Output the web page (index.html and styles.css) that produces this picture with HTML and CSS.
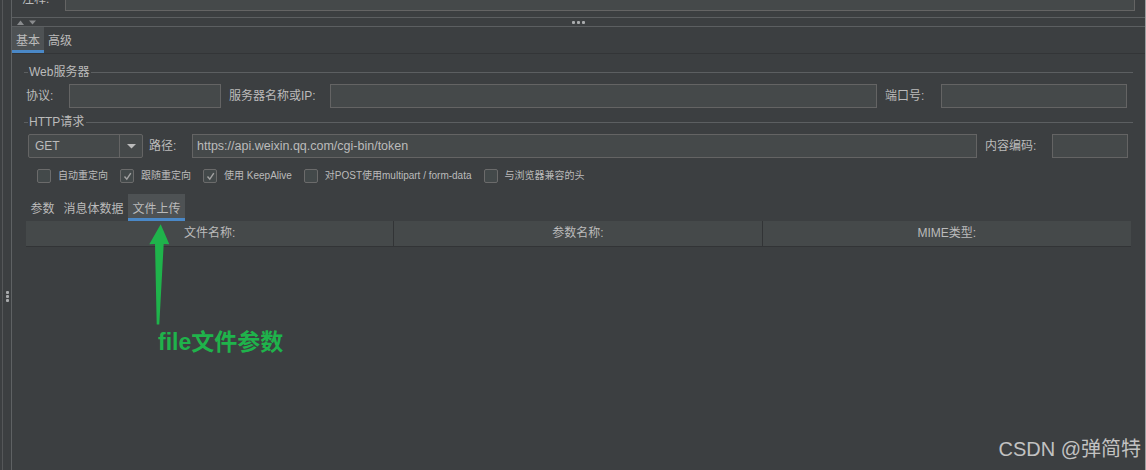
FILE: index.html
```html
<!DOCTYPE html>
<html lang="zh-CN">
<head>
<meta charset="utf-8">
<title>HTTP请求</title>
<link rel="stylesheet" href="styles.css">
</head>
<body>
<div class="app">
  <div class="sidebar">
    <span class="vdots"><i></i><i></i><i></i></span>
  </div>
  <div class="main">
    <div class="comment-row">
      <div class="comment-inner">
        <span class="lbl comment-lbl">注释:</span>
        <div class="field grow"></div>
      </div>
    </div>
    <div class="splitter">
      <span class="arrows">
        <svg width="19" height="5" viewBox="0 0 19 5"><polygon points="0,5 3.5,0.5 7,5" fill="#8a8c8e"/><polygon points="12,0.5 19,0.5 15.5,4.5" fill="#8a8c8e"/></svg>
      </span>
      <span class="hdots"><i></i><i></i><i></i></span>
      <span></span>
    </div>
    <div class="tabs">
      <div class="tab active">基本</div>
      <div class="tab">高级</div>
    </div>
    <div class="content">
      <div class="group-title"><span>Web服务器</span></div>
      <div class="row row-server">
        <span class="lbl w43">协议:</span>
        <div class="field w152"></div>
        <span class="lbl w101 ml8">服务器名称或IP:</span>
        <div class="field grow"></div>
        <span class="lbl w56 ml8">端口号:</span>
        <div class="field w186"></div>
      </div>
      <div class="group-title t2"><span>HTTP请求</span></div>
      <div class="row row-http">
        <div class="combo">
          <span class="combo-val">GET</span>
          <span class="combo-btn"><svg width="9" height="5" viewBox="0 0 9 5"><polygon points="0,0 9,0 4.5,4.5" fill="#bbbbbb"/></svg></span>
        </div>
        <span class="lbl w43 ml6">路径:</span>
        <div class="field grow"><span class="field-text">https://api.weixin.qq.com/cgi-bin/token</span></div>
        <span class="lbl w67 ml8">内容编码:</span>
        <div class="field w76"></div>
      </div>
      <div class="checks">
        <label class="check"><span class="box"></span><span class="ctext">自动重定向</span></label>
        <label class="check"><span class="box checked"><svg width="11" height="11" viewBox="0 0 11 11"><polyline points="2.5,5.5 4.8,8.2 8.8,2.2" fill="none" stroke="#a3a3a3" stroke-width="1.4"/></svg></span><span class="ctext">跟随重定向</span></label>
        <label class="check"><span class="box checked"><svg width="11" height="11" viewBox="0 0 11 11"><polyline points="2.5,5.5 4.8,8.2 8.8,2.2" fill="none" stroke="#a3a3a3" stroke-width="1.4"/></svg></span><span class="ctext">使用 KeepAlive</span></label>
        <label class="check"><span class="box"></span><span class="ctext">对POST使用multipart / form-data</span></label>
        <label class="check"><span class="box"></span><span class="ctext">与浏览器兼容的头</span></label>
      </div>
      <div class="subtabs">
        <div class="subtab">参数</div>
        <div class="subtab">消息体数据</div>
        <div class="subtab active">文件上传</div>
      </div>
      <div class="table-head">
        <div class="th">文件名称:</div>
        <div class="th">参数名称:</div>
        <div class="th">MIME类型:</div>
      </div>
    </div>
  </div>
</div>
<svg class="pointer" width="30" height="110" viewBox="0 0 30 110">
  <polygon points="11.7,0.3 0.3,20.3 6,20 7.7,100.5 10.3,100.5 14.7,20 20.3,20.3" fill="#1fb34b"/>
</svg>
<div class="note">file文件参数</div>
<div class="watermark">CSDN @弹简特</div>
</body>
</html>
```
FILE: styles.css
```css
* { box-sizing: border-box; }
html, body {
  margin: 0;
  padding: 0;
}
body {
  width: 1146px;
  height: 470px;
  overflow: hidden;
  background: #3c3f41;
  color: #bbbbbb;
  font-family: "Liberation Sans", "Noto Sans CJK SC", sans-serif;
  font-size: 12px;
  position: relative;
}
.app {
  display: flex;
  height: 470px;
}
.sidebar {
  width: 10px;
  margin-left: 2px;
  border-left: 1px solid #555759;
  border-right: 1px solid #5f6264;
  display: flex;
  flex-direction: column;
  align-items: center;
}
.vdots {
  margin-top: 291px;
  display: flex;
  flex-direction: column;
  gap: 1px;
}
.vdots i, .hdots i {
  display: block;
  width: 3px;
  height: 3px;
  border-radius: 1px;
  background: #a9abad;
}
.main {
  flex: 1;
  display: flex;
  flex-direction: column;
  border-right: 1px solid #9d9fa1;
}
.comment-row {
  height: 18px;
  border-bottom: 1px solid #5c5f61;
  overflow: hidden;
}
.comment-inner {
  display: flex;
  margin-top: -13px;
  height: 24px;
  padding-left: 10px;
  padding-right: 10px;
}
.comment-lbl {
  width: 43px;
  line-height: 24px;
}
.splitter {
  height: 9px;
  border-bottom: 1px solid #5c5f61;
  display: grid;
  grid-template-columns: 1fr auto 1fr;
  align-items: center;
}
.arrows {
  padding-left: 5px;
  display: flex;
  align-items: center;
  height: 8px;
  padding-top: 1px;
}
.arrows svg { display: block; }
.hdots {
  display: flex;
  gap: 1.6px;
  padding-top: 1px;
}
.tabs {
  height: 27px;
  border-bottom: 1px solid #333537;
  display: flex;
}
.tab {
  padding: 5px 4px 0;
  height: 26px;
  line-height: 18px;
  font-size: 12px;
  border-bottom: 3px solid transparent;
}
.tab.active {
  background: #4e5254;
  border-bottom-color: #4a88c7;
}
.content {
  padding: 0 12px;
  display: flex;
  flex-direction: column;
}
.group-title {
  margin-top: 11px;
  height: 15px;
  display: flex;
  align-items: center;
}
.group-title.t2 { margin-top: 7px; }
.group-title::before {
  content: "";
  width: 4px;
  height: 1px;
  background: #5c5f61;
}
.group-title::after {
  content: "";
  flex: 1;
  height: 1px;
  background: #5c5f61;
}
.group-title span {
  padding: 0 2px 0 1px;
  line-height: 15px;
}
.row {
  margin-top: 4px;
  height: 24px;
  display: flex;
  align-items: stretch;
}
.row-server { padding-left: 2px; padding-right: 6px; }
.row-http { padding-left: 4px; padding-right: 5px; }
.lbl {
  line-height: 24px;
  white-space: nowrap;
  flex: none;
}
.w43 { width: 43px; }
.w56 { width: 56px; }
.w67 { width: 67px; }
.w101 { width: 101px; }
.ml6 { margin-left: 6px; }
.ml8 { margin-left: 8px; }
.field {
  background: #45494a;
  border: 1px solid #646464;
  height: 24px;
  flex: none;
}
.field.grow { flex: 1; }
.w152 { width: 152px; }
.w186 { width: 186px; }
.w76 { width: 76px; }
.field-text {
  display: block;
  padding-left: 4px;
  line-height: 22px;
  font-size: 12.5px;
  color: #bbbbbb;
}
.combo {
  width: 115px;
  flex: none;
  display: flex;
  background: #45494a;
  border: 1px solid #646464;
  border-radius: 2px;
}
.combo-val {
  flex: 1;
  padding-left: 6px;
  line-height: 22px;
  border-right: 1px solid #646464;
}
.combo-btn {
  width: 22px;
  display: flex;
  align-items: center;
  justify-content: center;
}
.combo-btn svg { display: block; }
.checks {
  margin-top: 11px;
  height: 14px;
  display: flex;
  padding-left: 13px;
}
.check {
  display: flex;
  align-items: center;
  margin-right: 12px;
}
.box {
  width: 14px;
  height: 14px;
  border: 1px solid #6b6b6b;
  border-radius: 2px;
  background: #43494a;
  margin-right: 7px;
  display: flex;
  align-items: center;
  justify-content: center;
}
.box svg { display: block; }
.ctext {
  font-size: 10px;
  line-height: 14px;
  white-space: nowrap;
}
.subtabs {
  margin-top: 11px;
  height: 27px;
  display: flex;
  padding-left: 2px;
}
.subtab {
  padding: 6px 4.5px 0;
  line-height: 18px;
  border-bottom: 3px solid transparent;
}
.subtab.active {
  background: #4e5254;
  border-bottom-color: #4a88c7;
}
.table-head {
  margin: 0 2px;
  height: 26px;
  display: grid;
  grid-template-columns: 1fr 1fr 1fr;
  background: #45494a;
  border-bottom: 1px solid #323436;
}
.th {
  text-align: center;
  line-height: 25px;
  border-right: 1px solid #323436;
}
.th:last-child { border-right: none; }
.pointer {
  position: absolute;
  left: 149px;
  top: 224px;
}
.note {
  position: absolute;
  left: 158px;
  top: 328px;
  font-family: "Liberation Sans", "Noto Sans CJK SC", sans-serif;
  font-weight: bold;
  font-size: 23px;
  line-height: 28px;
  color: #1fb34b;
}
.watermark {
  position: absolute;
  right: 5px;
  top: 435px;
  font-family: "Liberation Sans", "Noto Sans CJK SC", sans-serif;
  font-size: 20px;
  line-height: 28px;
  color: #c2c2c2;
}
```
